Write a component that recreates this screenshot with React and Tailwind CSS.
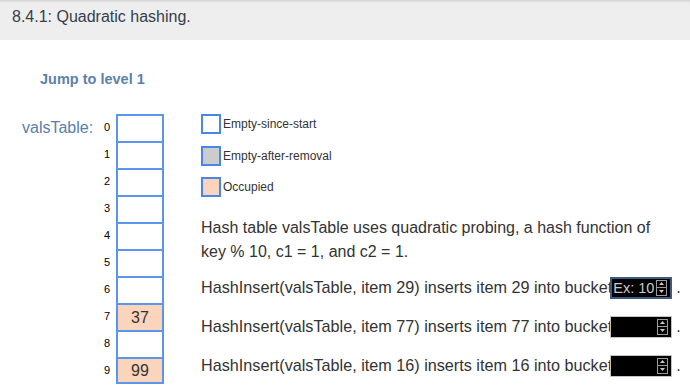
import React from "react";

const rows = ["", "", "", "", "", "", "", "37", "", "99"];

const legend = [
  { label: "Empty-since-start", bg: "bg-white" },
  { label: "Empty-after-removal", bg: "bg-[#cccccc]" },
  { label: "Occupied", bg: "bg-[#fbd5bb]" },
];

const inserts = [
  { item: 29, focused: true },
  { item: 77, focused: false },
  { item: 16, focused: false },
];

const Spinner = () => (
  <div className="flex flex-col w-[11px] h-[16px] border border-[#9a9a9a] mr-[3px]">
    <div className="flex-1 flex items-center justify-center border-b border-[#9a9a9a]">
      <svg width="5" height="3" viewBox="0 0 5 3">
        <path d="M0 3 L2.5 0 L5 3 Z" fill="#c8c8c8" />
      </svg>
    </div>
    <div className="flex-1 flex items-center justify-center">
      <svg width="5" height="3" viewBox="0 0 5 3">
        <path d="M0 0 L2.5 3 L5 0 Z" fill="#c8c8c8" />
      </svg>
    </div>
  </div>
);

const BucketInput = ({ focused }) => (
  <div
    className={`ml-[-2px] flex items-center w-[62px] h-[22px] bg-black ${
      focused ? "border-2 border-[#3d5b82]" : "border border-[#c4c4c4]"
    }`}
  >
    <span className="flex-1 pl-[1px] text-[14.5px] leading-[18px] text-[#c9c9c9] whitespace-nowrap overflow-hidden">
      {focused ? "Ex: 10" : ""}
    </span>
    <Spinner />
  </div>
);

export default function App() {
  return (
    <div className="w-[690px] h-[386px] overflow-hidden bg-white font-['Liberation_Sans',Arial,sans-serif] text-[#333333]">
      {/* HEADER */}
      <div className="h-[40px] bg-[#eeeeee] pl-[12px] pt-[7px] text-[16px] leading-[20px] text-[#36404a] shadow-[inset_0_3px_3px_-2px_rgba(0,0,0,0.15)]">
        8.4.1: Quadratic hashing.
      </div>

      <div className="pl-[40px] pt-[30px] text-[14.5px] leading-[18px] font-bold text-[#5b82aa]">
        Jump to level 1
      </div>

      <div className="flex mt-[26px]">
        {/* TABLE */}
        <div className="flex pl-[22px]">
          <div className="w-[76px] text-[16px] leading-[27px] text-[#5a7fa8]">
            valsTable:
          </div>
          <div className="w-[12px] flex flex-col">
            {rows.map((_, i) => (
              <div
                key={i}
                className="h-[27px] flex items-center justify-end text-[11px] text-black"
              >
                {i}
              </div>
            ))}
          </div>
          <div className="ml-[6px] w-[48px] flex flex-col">
            {rows.map((v, i) => (
              <div
                key={i}
                className={`h-[27px] border-x-2 border-t-2 border-[#5a96ee] flex items-center justify-center text-[16px] text-[#333] ${
                  i === rows.length - 1 ? "border-b-2" : ""
                } ${v ? "bg-[#fbd5bb]" : "bg-white"}`}
              >
                {v}
              </div>
            ))}
          </div>
        </div>

        {/* RIGHT SIDE */}
        <div className="ml-[37px] flex flex-col">
          <div className="flex flex-col gap-[11.5px]">
            {legend.map((l) => (
              <div key={l.label} className="flex items-center">
                <div className={`w-[20px] h-[20px] border-2 border-[#4a86e8] ${l.bg}`} />
                <span className="ml-[2px] text-[12px] text-[#333]">{l.label}</span>
              </div>
            ))}
          </div>

          <p className="mt-[19px] text-[16px] leading-[24px] text-[#333] w-[470px]">
            Hash table valsTable uses quadratic probing, a hash function of key % 10, c1 = 1, and c2 = 1.
          </p>

          <div className="mt-[4px] flex flex-col">
            {inserts.map((r) => (
              <div key={r.item} className="h-[39px] flex items-center text-[16.2px] text-[#333] whitespace-nowrap">
                <span>
                  HashInsert(valsTable, item {r.item}) inserts item {r.item} into bucket
                </span>
                <BucketInput focused={r.focused} />
                <span className="ml-[4px]">.</span>
              </div>
            ))}
          </div>
        </div>
      </div>
    </div>
  );
}
